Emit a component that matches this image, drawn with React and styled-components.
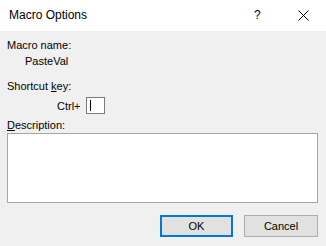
import React from "react";
import styled, { createGlobalStyle } from "styled-components";

const Global = createGlobalStyle`
  html, body {
    margin: 0;
    padding: 0;
    background: #f0f0f0;
  }
  body {
    font-family: "Liberation Sans", Arial, sans-serif;
    color: #000;
  }
`;

export default function App() {
  return (
    <>
      <Global />
      <Dialog>
        <TitleBar>
          <Title>Macro Options</Title>
          <Help>?</Help>
          <Close>
            <svg width="11" height="11" viewBox="0 0 11 11">
              <path d="M0.5 0.5 L10.5 10.5 M10.5 0.5 L0.5 10.5" stroke="#000" strokeWidth="1" />
            </svg>
          </Close>
        </TitleBar>
        <Body>
          <Label>Macro name:</Label>
          <MacroName>PasteVal</MacroName>
          <Label $top={11}>
            Shortcut <u>k</u>ey:
          </Label>
          <ShortcutRow>
            <CtrlLabel>Ctrl+</CtrlLabel>
            <KeyBox>
              <Caret />
            </KeyBox>
          </ShortcutRow>
          <Label $top={4}>
            <u>D</u>escription:
          </Label>
          <TextArea />
          <Buttons>
            <Button $primary>OK</Button>
            <Button>Cancel</Button>
          </Buttons>
        </Body>
      </Dialog>
    </>
  );
}

const Dialog = styled.div`
  width: 326px;
  height: 246px;
  display: flex;
  flex-direction: column;
  background: #f0f0f0;
`;

const TitleBar = styled.div`
  height: 31px;
  background: #fff;
  display: flex;
  align-items: center;
  padding-left: 9px;
`;

const Title = styled.div`
  font-size: 12px;
  flex: 1;
  margin-top: -1px;
`;

const Help = styled.div`
  font-size: 12px;
  width: 12px;
  margin-right: 32px;
  margin-top: -1px;
`;

const Close = styled.div`
  width: 11px;
  height: 11px;
  margin-right: 17px;
  margin-top: -1px;
  display: flex;
`;

const Body = styled.div`
  flex: 1;
  padding: 7px 8px 0 7px;
  display: flex;
  flex-direction: column;
`;

const Label = styled.div`
  font-size: 11px;
  line-height: 14px;
  margin-top: ${(p) => p.$top || 0}px;
  u {
    text-decoration-thickness: 1px;
    text-underline-offset: 1px;
  }
`;

const MacroName = styled.div`
  font-size: 11px;
  line-height: 14px;
  margin-top: 2px;
  padding-left: 18px;
`;

const ShortcutRow = styled.div`
  display: flex;
  align-items: center;
  margin-top: 4px;
  padding-left: 50px;
  height: 17px;
`;

const CtrlLabel = styled.div`
  font-size: 11px;
  line-height: 14px;
  width: 29px;
`;

const KeyBox = styled.div`
  width: 14px;
  height: 15px;
  background: #fff;
  border: 1px solid #7a7a7a;
  display: flex;
  align-items: center;
  padding-left: 3px;
  box-sizing: content-box;
`;

const Caret = styled.span`
  width: 1px;
  height: 11px;
  background: #000;
`;

const TextArea = styled.div`
  margin-top: 1px;
  width: 311px;
  height: 70px;
  box-sizing: border-box;
  background: #fff;
  border: 1px solid #a6a6a6;
`;

const Buttons = styled.div`
  display: flex;
  justify-content: flex-end;
  gap: 11px;
  margin-top: 12px;
`;

const Button = styled.div`
  width: ${(p) => (p.$primary ? 73 : 74)}px;
  height: 22px;
  box-sizing: border-box;
  background: #e1e1e1;
  border: ${(p) => (p.$primary ? "2px solid #0078d7" : "1px solid #adadad")};
  font-size: 11px;
  display: flex;
  align-items: center;
  justify-content: center;
`;
